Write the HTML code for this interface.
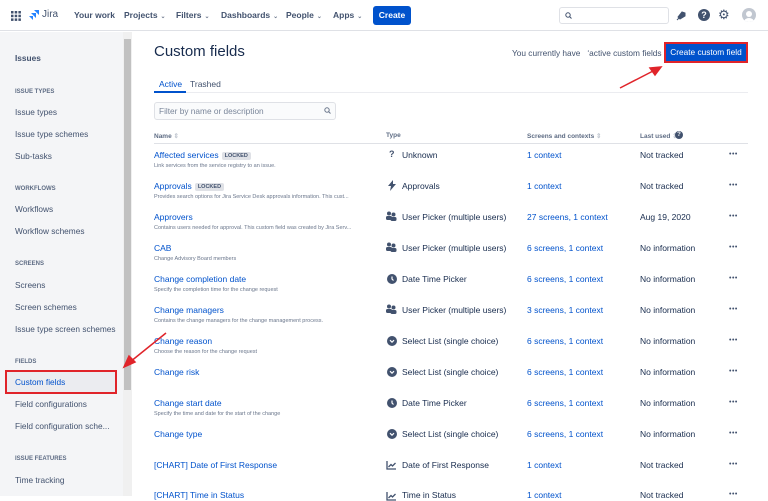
<!DOCTYPE html>
<html><head><meta charset="utf-8"><style>
*{margin:0;padding:0;box-sizing:border-box}
body{width:768px;height:496px;overflow:hidden;position:relative;background:#fff;font-family:"Liberation Sans",sans-serif;color:#172b4d}
.a{position:absolute;white-space:nowrap}
#hdr{position:absolute;left:0;top:0;width:768px;height:31px;background:#fff;border-bottom:1px solid #dfe1e6}
.nav{font-size:8.5px;color:#42526e;font-weight:bold;top:10px}
.car{font-size:6px;color:#6b778c;margin-left:3px}
#side{position:absolute;left:0;top:32px;width:123px;height:464px;background:#f4f5f7}
.sh{font-size:6px;font-weight:bold;color:#5e6c84;left:15px}
.si{font-size:8.3px;color:#42526e;left:15px}
.nm{font-size:8.5px;color:#0052cc;left:154px}
.ds{font-size:5.5px;color:#6b778c;left:154px}
.tp{font-size:8.5px;color:#172b4d;left:402px}
.sc{font-size:8.5px;color:#0052cc;left:527px}
.lu{font-size:8.5px;color:#172b4d;left:640px}
.dt{font-size:7px;color:#42526e;left:729px;letter-spacing:0.5px}
.lk{display:inline-block;background:#dfe1e6;color:#42526e;font-size:5.5px;font-weight:bold;padding:1px 3px;border-radius:2px;margin-left:3px;vertical-align:1px}
.ic{position:absolute;left:387px;width:10px;height:10px;border-radius:50%;background:#42526e}
.ic svg{position:absolute;left:0;top:0}
</style></head><body>
<div id="hdr">
<svg class="a" style="left:11px;top:11px" width="10" height="10"><g fill="#42526e"><rect x="0" y="0" width="2.5" height="2.5"/><rect x="3.7" y="0" width="2.5" height="2.5"/><rect x="7.4" y="0" width="2.5" height="2.5"/><rect x="0" y="3.7" width="2.5" height="2.5"/><rect x="3.7" y="3.7" width="2.5" height="2.5"/><rect x="7.4" y="3.7" width="2.5" height="2.5"/><rect x="0" y="7.4" width="2.5" height="2.5"/><rect x="3.7" y="7.4" width="2.5" height="2.5"/><rect x="7.4" y="7.4" width="2.5" height="2.5"/></g></svg>
<svg class="a" style="left:28px;top:9px" width="12" height="12"><path d="M11 1 L6 1 L11 6Z M8 4 L3 4 L8 9Z M5 7 L1 7 L5 11Z" fill="#2684ff"/></svg>
<div class="a" style="left:42px;top:9px;font-size:10px;color:#42526e">Jira</div>
<div class="a nav" style="left:74px">Your work</div>
<div class="a nav" style="left:124px">Projects<span class="car">&#8964;</span></div>
<div class="a nav" style="left:176px">Filters<span class="car">&#8964;</span></div>
<div class="a nav" style="left:221px">Dashboards<span class="car">&#8964;</span></div>
<div class="a nav" style="left:286px">People<span class="car">&#8964;</span></div>
<div class="a nav" style="left:333px">Apps<span class="car">&#8964;</span></div>
<div class="a" style="left:373px;top:6px;width:38px;height:19px;background:#0052cc;border-radius:3px;color:#fff;font-size:8.5px;font-weight:bold;text-align:center;line-height:19px">Create</div>
<div class="a" style="left:559px;top:7px;width:110px;height:17px;border:1px solid #dfe1e6;border-radius:3px;background:#fff"></div>
<svg class="a" style="left:565px;top:12px" width="7" height="7"><circle cx="3" cy="3" r="2.2" stroke="#42526e" fill="none"/><path d="M4.6 4.6 L6.5 6.5" stroke="#42526e"/></svg>
<svg class="a" style="left:676px;top:10px" width="11" height="11"><path d="M2 7 L6 2 L9 3 L9 6 L4 9Z M1 10 L3 8" fill="#42526e" stroke="#42526e"/></svg>
<div class="a" style="left:698px;top:9px;width:12px;height:12px;border-radius:50%;background:#42526e;color:#fff;font-size:9px;font-weight:bold;text-align:center;line-height:12px">?</div>
<div class="a" style="left:718px;top:7px;font-size:13px;color:#42526e">&#9881;</div>
<div class="a" style="left:742px;top:8px;width:14px;height:14px;border-radius:50%;background:#c1c7d0;overflow:hidden"><div class="a" style="left:4px;top:3px;width:6px;height:6px;border-radius:50%;background:#fff"></div><div class="a" style="left:2px;top:10px;width:10px;height:8px;border-radius:50%;background:#fff"></div></div>
</div>
<div id="side">
<div class="a si" style="top:21px;font-weight:bold;color:#42526e">Issues</div>
<div class="a sh" style="top:57px">ISSUE TYPES</div>
<div class="a si" style="top:75px">Issue types</div>
<div class="a si" style="top:97px">Issue type schemes</div>
<div class="a si" style="top:119px">Sub-tasks</div>
<div class="a sh" style="top:154px">WORKFLOWS</div>
<div class="a si" style="top:172px">Workflows</div>
<div class="a si" style="top:194px">Workflow schemes</div>
<div class="a sh" style="top:229px">SCREENS</div>
<div class="a si" style="top:248px">Screens</div>
<div class="a si" style="top:270px">Screen schemes</div>
<div class="a si" style="top:292px">Issue type screen schemes</div>
<div class="a sh" style="top:327px">FIELDS</div>
<div class="a" style="left:5px;top:338px;width:112px;height:24px;background:#ebecf0;border:2px solid #e0242a"></div>
<div class="a si" style="top:345px;color:#0052cc">Custom fields</div>
<div class="a si" style="top:367px">Field configurations</div>
<div class="a si" style="top:389px">Field configuration sche...</div>
<div class="a sh" style="top:424px">ISSUE FEATURES</div>
<div class="a si" style="top:443px">Time tracking</div>
</div>
<div class="a" style="left:123px;top:32px;width:9px;height:464px;background:#f0f0f0"></div>
<div class="a" style="left:124px;top:39px;width:7px;height:351px;background:#c1c1c1"></div>
<div class="a" style="left:154px;top:43px;font-size:15px;color:#172b4d">Custom fields</div>
<div class="a" style="left:512px;top:48px;font-size:8.3px;color:#42526e">You currently have &nbsp;&nbsp;&#8216;active custom fields</div>
<div class="a" style="left:664px;top:42px;width:84px;height:21px;background:#0052cc;border:2px solid #e0242a;color:#fff;font-size:8.3px;text-align:center;line-height:17px">Create custom field</div>
<div class="a" style="left:159px;top:79px;font-size:8.5px;color:#0052cc">Active</div>
<div class="a" style="left:190px;top:79px;font-size:8.5px;color:#42526e">Trashed</div>
<div class="a" style="left:154px;top:92px;width:594px;height:1px;background:#ebecf0"></div>
<div class="a" style="left:154px;top:91px;width:32px;height:2px;background:#0052cc"></div>
<div class="a" style="left:154px;top:102px;width:182px;height:18px;border:1px solid #dfe1e6;border-radius:3px;background:#fafbfc"></div>
<div class="a" style="left:159px;top:106px;font-size:8.3px;color:#7a869a">Filter by name or description</div>
<svg class="a" style="left:324px;top:107px" width="7" height="7"><circle cx="3" cy="3" r="2.2" stroke="#6b778c" fill="none"/><path d="M4.6 4.6 L6.5 6.5" stroke="#6b778c"/></svg>
<div class="a" style="left:154px;top:132px;font-size:6.5px;font-weight:bold;color:#5e6c84">Name <span style="color:#c1c7d0">&#8661;</span></div>
<div class="a" style="left:386px;top:132px;font-size:6.5px;font-weight:bold;color:#5e6c84">Type</div>
<div class="a" style="left:527px;top:132px;font-size:6.5px;font-weight:bold;color:#5e6c84">Screens and contexts <span style="color:#c1c7d0">&#8661;</span></div>
<div class="a" style="left:640px;top:132px;font-size:6.5px;font-weight:bold;color:#5e6c84">Last used <span style="color:#c1c7d0">&#8661;</span></div>
<div class="a" style="left:675px;top:131px;width:8px;height:8px;border-radius:50%;background:#42526e;color:#fff;font-size:6px;font-weight:bold;text-align:center;line-height:8px">?</div>
<div class="a" style="left:154px;top:143px;width:594px;height:1px;background:#dfe1e6"></div>

<div class="a nm" style="top:150px">Affected services<span class="lk">LOCKED</span></div><div class="a ds" style="top:163px">Link services from the service registry to an issue.</div>
<div class="a" style="left:389px;top:149px;font-size:9px;font-weight:bold;color:#42526e">?</div><div class="a tp" style="top:150px">Unknown</div><div class="a sc" style="top:150px">1 context</div><div class="a lu" style="top:150px">Not tracked</div><div class="a dt" style="top:151px">&#8226;&#8226;&#8226;</div>

<div class="a nm" style="top:181px">Approvals<span class="lk">LOCKED</span></div><div class="a ds" style="top:194px">Provides search options for Jira Service Desk approvals information. This cust...</div>
<svg class="a" style="left:387px;top:180px" width="10" height="11"><path d="M6 0 L1 6 L4 6 L3 11 L9 4 L6 4Z" fill="#42526e"/></svg><div class="a tp" style="top:181px">Approvals</div><div class="a sc" style="top:181px">1 context</div><div class="a lu" style="top:181px">Not tracked</div><div class="a dt" style="top:182px">&#8226;&#8226;&#8226;</div>

<div class="a nm" style="top:212px">Approvers</div><div class="a ds" style="top:225px">Contains users needed for approval. This custom field was created by Jira Serv...</div>
<svg class="a" style="left:386px;top:211px" width="11" height="10"><g fill="#42526e"><circle cx="3" cy="2.5" r="2"/><rect x="0" y="5" width="6" height="4" rx="1.5"/><circle cx="7.5" cy="3.5" r="2"/><rect x="4.5" y="6" width="6" height="4" rx="1.5"/></g></svg><div class="a tp" style="top:212px">User Picker (multiple users)</div><div class="a sc" style="top:212px">27 screens, 1 context</div><div class="a lu" style="top:212px">Aug 19, 2020</div><div class="a dt" style="top:213px">&#8226;&#8226;&#8226;</div>

<div class="a nm" style="top:243px">CAB</div><div class="a ds" style="top:256px">Change Advisory Board members</div>
<svg class="a" style="left:386px;top:242px" width="11" height="10"><g fill="#42526e"><circle cx="3" cy="2.5" r="2"/><rect x="0" y="5" width="6" height="4" rx="1.5"/><circle cx="7.5" cy="3.5" r="2"/><rect x="4.5" y="6" width="6" height="4" rx="1.5"/></g></svg><div class="a tp" style="top:243px">User Picker (multiple users)</div><div class="a sc" style="top:243px">6 screens, 1 context</div><div class="a lu" style="top:243px">No information</div><div class="a dt" style="top:244px">&#8226;&#8226;&#8226;</div>

<div class="a nm" style="top:274px">Change completion date</div><div class="a ds" style="top:287px">Specify the completion time for the change request</div>
<div class="ic" style="top:274px"><svg width="10" height="10"><path d="M5 2.5 V5 L6.5 6.5" stroke="#fff" stroke-width="1.2" fill="none"/></svg></div><div class="a tp" style="top:274px">Date Time Picker</div><div class="a sc" style="top:274px">6 screens, 1 context</div><div class="a lu" style="top:274px">No information</div><div class="a dt" style="top:275px">&#8226;&#8226;&#8226;</div>

<div class="a nm" style="top:305px">Change managers</div><div class="a ds" style="top:318px">Contains the change managers for the change management process.</div>
<svg class="a" style="left:386px;top:304px" width="11" height="10"><g fill="#42526e"><circle cx="3" cy="2.5" r="2"/><rect x="0" y="5" width="6" height="4" rx="1.5"/><circle cx="7.5" cy="3.5" r="2"/><rect x="4.5" y="6" width="6" height="4" rx="1.5"/></g></svg><div class="a tp" style="top:305px">User Picker (multiple users)</div><div class="a sc" style="top:305px">3 screens, 1 context</div><div class="a lu" style="top:305px">No information</div><div class="a dt" style="top:306px">&#8226;&#8226;&#8226;</div>

<div class="a nm" style="top:336px">Change reason</div><div class="a ds" style="top:349px">Choose the reason for the change request</div>
<div class="ic" style="top:336px"><svg width="10" height="10"><path d="M3 4.2 L5 6.2 L7 4.2" stroke="#fff" stroke-width="1.2" fill="none"/></svg></div><div class="a tp" style="top:336px">Select List (single choice)</div><div class="a sc" style="top:336px">6 screens, 1 context</div><div class="a lu" style="top:336px">No information</div><div class="a dt" style="top:337px">&#8226;&#8226;&#8226;</div>

<div class="a nm" style="top:367px">Change risk</div>
<div class="ic" style="top:367px"><svg width="10" height="10"><path d="M3 4.2 L5 6.2 L7 4.2" stroke="#fff" stroke-width="1.2" fill="none"/></svg></div><div class="a tp" style="top:367px">Select List (single choice)</div><div class="a sc" style="top:367px">6 screens, 1 context</div><div class="a lu" style="top:367px">No information</div><div class="a dt" style="top:368px">&#8226;&#8226;&#8226;</div>

<div class="a nm" style="top:398px">Change start date</div><div class="a ds" style="top:411px">Specify the time and date for the start of the change</div>
<div class="ic" style="top:398px"><svg width="10" height="10"><path d="M5 2.5 V5 L6.5 6.5" stroke="#fff" stroke-width="1.2" fill="none"/></svg></div><div class="a tp" style="top:398px">Date Time Picker</div><div class="a sc" style="top:398px">6 screens, 1 context</div><div class="a lu" style="top:398px">No information</div><div class="a dt" style="top:399px">&#8226;&#8226;&#8226;</div>

<div class="a nm" style="top:429px">Change type</div>
<div class="ic" style="top:429px"><svg width="10" height="10"><path d="M3 4.2 L5 6.2 L7 4.2" stroke="#fff" stroke-width="1.2" fill="none"/></svg></div><div class="a tp" style="top:429px">Select List (single choice)</div><div class="a sc" style="top:429px">6 screens, 1 context</div><div class="a lu" style="top:429px">No information</div><div class="a dt" style="top:430px">&#8226;&#8226;&#8226;</div>

<div class="a nm" style="top:460px">[CHART] Date of First Response</div>
<svg class="a" style="left:386px;top:460px" width="11" height="10"><path d="M1 1 V9 H10 M2.5 7 L5 4.5 L6.5 6 L9.5 3" stroke="#42526e" stroke-width="1.3" fill="none"/></svg><div class="a tp" style="top:460px">Date of First Response</div><div class="a sc" style="top:460px">1 context</div><div class="a lu" style="top:460px">Not tracked</div><div class="a dt" style="top:461px">&#8226;&#8226;&#8226;</div>

<div class="a nm" style="top:490px">[CHART] Time in Status</div>
<svg class="a" style="left:386px;top:491px" width="11" height="10"><path d="M1 1 V9 H10 M2.5 7 L5 4.5 L6.5 6 L9.5 3" stroke="#42526e" stroke-width="1.3" fill="none"/></svg><div class="a tp" style="top:490px">Time in Status</div><div class="a sc" style="top:490px">1 context</div><div class="a lu" style="top:490px">Not tracked</div><div class="a dt" style="top:491px">&#8226;&#8226;&#8226;</div>

<svg class="a" style="left:0;top:0" width="768" height="496"><g stroke="#e0242a" stroke-width="1.5" fill="#e0242a"><line x1="620" y1="88" x2="655" y2="70"/><path d="M661 67 L650 68 L655 75Z"/><line x1="166" y1="333" x2="130" y2="362"/><path d="M124 367 L129 356 L135 362Z"/></g></svg>
</body></html>
